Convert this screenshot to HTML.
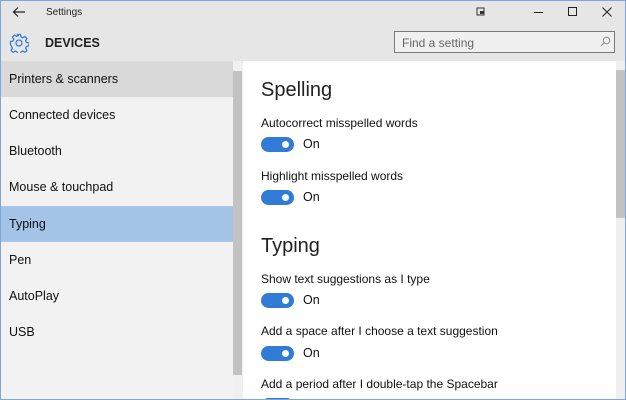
<!DOCTYPE html>
<html style="overflow:hidden;width:626px;height:400px"><head><style>
*{margin:0;padding:0;box-sizing:border-box}
body{width:626px;height:400px;overflow:hidden;font-family:"Liberation Sans",sans-serif;background:#e6e6e6;position:relative;color:#000}
.a{position:absolute}
.frame{left:0;top:0;width:626px;height:400px;border:1px solid #7ea6d8;border-top:none;pointer-events:none;z-index:9}
.item{position:absolute;left:1px;width:232px;height:36px;font-size:12.5px;line-height:36px;padding-left:8px;color:#111}
.lbl{position:absolute;left:261px;font-size:12px;color:#111}
.tog{position:absolute;left:261px;width:33px;height:15px;border-radius:8px;background:#2f7bd6}
.tog:after{content:"";position:absolute;right:5px;top:4px;width:7px;height:7px;border-radius:50%;background:#fff}
.on{position:absolute;left:303px;font-size:12.5px;color:#111}
.h{position:absolute;left:261px;font-size:20px;color:#222}
</style></head><body>
<div class="a frame"></div>
<div class="a" style="left:0;top:0;width:626px;height:1px;background:#7ea6d8"></div>
<svg class="a" style="left:12px;top:6px" width="14" height="12" viewBox="0 0 14 12"><path d="M13 6H2M6 1.5L1.5 6L6 10.5" stroke="#222" stroke-width="1.2" fill="none"/></svg>
<div class="a" style="left:46px;top:7px;font-size:10px;color:#222">Settings</div>
<svg class="a" style="left:476px;top:7px" width="10" height="10" viewBox="0 0 10 10"><rect x="1" y="1" width="7" height="7" fill="none" stroke="#333"/><rect x="4" y="4" width="4" height="3" fill="#333"/></svg>
<div class="a" style="left:534px;top:12px;width:9px;height:1px;background:#222"></div>
<div class="a" style="left:568px;top:7px;width:9px;height:9px;border:1px solid #222"></div>
<svg class="a" style="left:602px;top:7px" width="10" height="10"><path d="M0.5 0.5L9.5 9.5M9.5 0.5L0.5 9.5" stroke="#222"/></svg>
<svg class="a" style="left:9px;top:33px" width="20" height="20" viewBox="0 0 20 20"><g fill="none" stroke="#3b80d4" stroke-width="1.3"><path d="M8.5 1.5h3l.5 2.5 1.8.8 2.1-1.4 2.1 2.1-1.4 2.1.8 1.8 2.5.5v3l-2.5.5-.8 1.8 1.4 2.1-2.1 2.1-2.1-1.4-1.8.8-.5 2.5h-3l-.5-2.5-1.8-.8-2.1 1.4-2.1-2.1 1.4-2.1-.8-1.8L1.5 11.5v-3l2.5-.5.8-1.8-1.4-2.1 2.1-2.1 2.1 1.4 1.8-.8z"/><circle cx="10" cy="10" r="3"/></g></svg>
<div class="a" style="left:45px;top:36px;font-size:12.5px;font-weight:bold;color:#222">DEVICES</div>
<div class="a" style="left:394px;top:31px;width:221px;height:22px;border:1px solid #7a7a7a;background:#f0f0f0;font-size:12px;color:#666;padding:4px 0 0 7px">Find a setting</div>
<svg class="a" style="left:600px;top:36px" width="11" height="11"><circle cx="6.5" cy="4.5" r="3.3" fill="none" stroke="#888"/><path d="M4 7L1 10" stroke="#888"/></svg>
<div class="a" style="left:1px;top:61px;width:232px;height:339px;background:#f2f2f2"></div>
<div class="item" style="top:61px;background:#d9d9d9">Printers &amp; scanners</div>
<div class="item" style="top:97px">Connected devices</div>
<div class="item" style="top:133px">Bluetooth</div>
<div class="item" style="top:169px">Mouse &amp; touchpad</div>
<div class="item" style="top:206px;background:#a3c3e7">Typing</div>
<div class="item" style="top:242px">Pen</div>
<div class="item" style="top:278px">AutoPlay</div>
<div class="item" style="top:314px">USB</div>
<div class="a" style="left:233px;top:61px;width:10px;height:339px;background:#f0f0f0"></div>
<div class="a" style="left:233px;top:71px;width:9px;height:304px;background:#c2c2c2"></div>
<div class="a" style="left:243px;top:61px;width:373px;height:338px;background:#fff;overflow:hidden">
<div class="tog" style="top:337px;left:18px"></div>
</div>
<div class="a" style="left:616px;top:61px;width:9px;height:339px;background:#f0f0f0"></div>
<div class="a" style="left:616px;top:70px;width:9px;height:148px;background:#c2c2c2"></div>
<div class="h" style="top:79px">Spelling</div>
<div class="lbl" style="top:116px">Autocorrect misspelled words</div>
<div class="tog" style="top:137px"></div><div class="on" style="top:137px">On</div>
<div class="lbl" style="top:169px">Highlight misspelled words</div>
<div class="tog" style="top:190px"></div><div class="on" style="top:190px">On</div>
<div class="h" style="top:235px">Typing</div>
<div class="lbl" style="top:272px">Show text suggestions as I type</div>
<div class="tog" style="top:293px"></div><div class="on" style="top:293px">On</div>
<div class="lbl" style="top:324px">Add a space after I choose a text suggestion</div>
<div class="tog" style="top:346px"></div><div class="on" style="top:346px">On</div>
<div class="lbl" style="top:377px">Add a period after I double-tap the Spacebar</div>
</body></html>
